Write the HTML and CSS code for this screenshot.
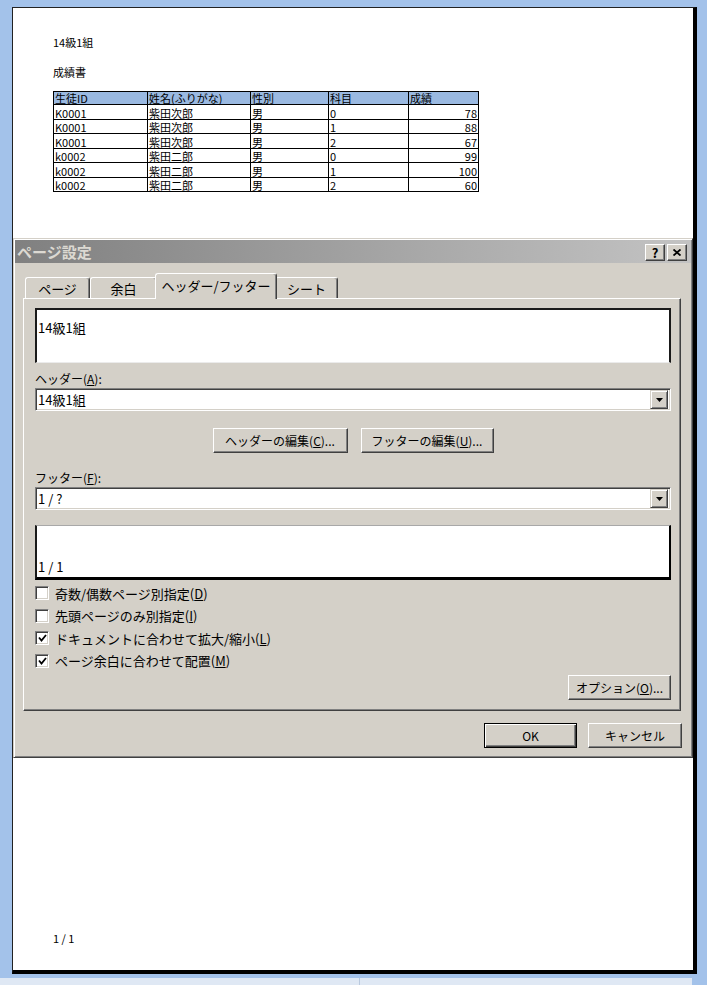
FILE: index.html
```html
<!DOCTYPE html>
<html lang="ja">
<head>
  <meta charset="UTF-8" />
  <meta name="viewport" content="width=device-width, initial-scale=1.0"/>
  <title>ページ設定</title>
  <link rel="stylesheet" href="styles.css">
</head>
<body>
  <div class="screen">
    <div class="page">
      <div class="sheet">
        <p class="sheet-head">14級1組</p>
        <p class="sheet-title">成績書</p>
        <table class="grades">
          <colgroup>
            <col style="width:94px"><col style="width:103px"><col style="width:78px"><col style="width:80px"><col style="width:70px">
          </colgroup>
          <tr class="head">
            <th>生徒ID</th><th>姓名(ふりがな)</th><th>性別</th><th>科目</th><th>成績</th>
          </tr>
          <tr><td>K0001</td><td>紫田次郎</td><td>男</td><td>0</td><td class="num">78</td></tr>
          <tr><td>K0001</td><td>紫田次郎</td><td>男</td><td>1</td><td class="num">88</td></tr>
          <tr><td>K0001</td><td>紫田次郎</td><td>男</td><td>2</td><td class="num">67</td></tr>
          <tr><td>k0002</td><td>紫田二郎</td><td>男</td><td>0</td><td class="num">99</td></tr>
          <tr><td>k0002</td><td>紫田二郎</td><td>男</td><td>1</td><td class="num">100</td></tr>
          <tr><td>k0002</td><td>紫田二郎</td><td>男</td><td>2</td><td class="num">60</td></tr>
        </table>
      </div>
      <p class="sheet-foot">1 / 1</p>

      <div class="dialog">
        <div class="titlebar">
          <span class="title">ページ設定</span>
          <div class="title-buttons">
            <span class="tbtn">?</span>
            <span class="tbtn">
              <svg width="8" height="7" viewBox="0 0 8 7"><path d="M0.5 0.5 L7.5 6.5 M7.5 0.5 L0.5 6.5" stroke="#000" stroke-width="1.8"/></svg>
            </span>
          </div>
        </div>

        <div class="dialog-body">
          <div class="tabs">
            <div class="tab t-page">ページ</div>
            <div class="tab t-margin">余白</div>
            <div class="tab t-hf active">ヘッダー/フッター</div>
            <div class="tab t-sheet">シート</div>
          </div>

          <div class="panel">
            <div class="preview preview-top">14級1組</div>

            <div class="field-label">ヘッダー(<u>A</u>):</div>
            <div class="combo">
              <span>14級1組</span>
              <span class="drop"><svg width="7" height="4" viewBox="0 0 7 4"><polygon points="0,0 7,0 3.5,4" fill="#000"/></svg></span>
            </div>

            <div class="edit-buttons">
              <button class="btn b-header">ヘッダーの編集(<u>C</u>)...</button>
              <button class="btn b-footer">フッターの編集(<u>U</u>)...</button>
            </div>

            <div class="field-label second">フッター(<u>F</u>):</div>
            <div class="combo">
              <span>1 / ?</span>
              <span class="drop"><svg width="7" height="4" viewBox="0 0 7 4"><polygon points="0,0 7,0 3.5,4" fill="#000"/></svg></span>
            </div>

            <div class="preview preview-bottom">1 / 1</div>

            <ul class="checks">
              <li><span class="box"></span>奇数/偶数ページ別指定(<u>D</u>)</li>
              <li><span class="box"></span>先頭ページのみ別指定(<u>I</u>)</li>
              <li><span class="box"><svg width="9" height="8" viewBox="0 0 9 8"><path d="M1 3.5 L3.5 6.5 L8 1" fill="none" stroke="#000" stroke-width="1.8"/></svg></span>ドキュメントに合わせて拡大/縮小(<u>L</u>)</li>
              <li><span class="box"><svg width="9" height="8" viewBox="0 0 9 8"><path d="M1 3.5 L3.5 6.5 L8 1" fill="none" stroke="#000" stroke-width="1.8"/></svg></span>ページ余白に合わせて配置(<u>M</u>)</li>
            </ul>

            <div class="options">
              <button class="btn b-options">オプション(<u>O</u>)...</button>
            </div>
          </div>

          <div class="dialog-buttons">
            <button class="btn b-ok">OK</button>
            <button class="btn b-cancel">キャンセル</button>
          </div>
        </div>
      </div>
    </div>
    <div class="status"><span class="status-cell"></span></div>
  </div>
</body>
</html>
```

FILE: styles.css
```css
* {
  box-sizing: border-box;
}

body {
  margin: 0;
  background: #a3c2ea;
  font-family: "Noto Sans CJK JP", "Liberation Sans", sans-serif;
  color: #000;
}

.screen {
  width: 707px;
  height: 985px;
  padding: 7px 0 0 12px;
  overflow: hidden;
}

/* printed page */
.page {
  position: relative;
  width: 685px;
  height: 967px;
  background: #fff;
  border-top: 1px solid #222;
  border-left: 1px solid #222;
  border-right: 4px solid #000;
  border-bottom: 4px solid #000;
  padding: 27px 0 25px 40px;
  display: flex;
  flex-direction: column;
}

.sheet-head,
.sheet-title,
.sheet-foot {
  margin: 0;
  font-size: 11px;
  line-height: 14px;
}

.sheet-title {
  margin-top: 16px;
}

.sheet-foot {
  margin-top: auto;
}

.grades {
  margin-top: 12px;
  border-collapse: collapse;
  table-layout: fixed;
  width: 425px;
  font-size: 11px;
  line-height: 12px;
}

.grades th,
.grades td {
  border: 1px solid #000;
  padding: 0 1px;
  text-align: left;
  font-weight: normal;
  vertical-align: bottom;
  white-space: nowrap;
}

.grades th {
  height: 11px;
  background: #9ab9e1;
}

.grades td {
  height: 14.5px;
}

.grades td.num {
  text-align: right;
}

/* status strip at the bottom */
.status {
  margin: 4px 0 0 -12px;
  width: 692px;
  height: 7px;
  background: #dfe8f4;
  display: flex;
}

.status-cell {
  width: 360px;
  border-right: 1px solid #b9c9de;
}

/* dialog window */
.dialog {
  position: absolute;
  left: 0;
  top: 230px;
  width: 680px;
  background: #d4d0c8;
  border: 1px solid;
  border-color: #d4d0c8 #404040 #404040 #d4d0c8;
  box-shadow: inset 1px 1px #fff, inset -1px -1px #808080;
  padding: 1px;
  font-size: 12px;
}

.titlebar {
  height: 23px;
  background: linear-gradient(to right, #808080, #c3c3c3);
  display: flex;
  align-items: center;
  justify-content: space-between;
  padding: 0 4px 0 2px;
}

.title {
  color: #dcd9d2;
  font-weight: bold;
  font-size: 15px;
  line-height: 23px;
}

.title-buttons {
  display: flex;
  gap: 2px;
  margin-top: 2px;
}

.tbtn {
  width: 20px;
  height: 17px;
  background: #d4d0c8;
  border: 1px solid;
  border-color: #fff #404040 #404040 #fff;
  box-shadow: inset -1px -1px #808080;
  display: flex;
  align-items: center;
  justify-content: center;
  font-weight: bold;
  font-size: 13px;
  line-height: 1;
}

.dialog-body {
  padding: 9px 10px 8px 8px;
}

.tabs {
  height: 26px;
  display: flex;
  align-items: flex-end;
  padding-left: 2px;
  font-size: 13px;
}

.tab {
  height: 21px;
  background: #d4d0c8;
  border-top: 1px solid #fff;
  border-left: 1px solid #fff;
  border-right: 1px solid #404040;
  box-shadow: inset -1px 0 #808080;
  border-radius: 3px 3px 0 0;
  display: flex;
  align-items: center;
  justify-content: center;
  line-height: 1;
  padding-top: 1px;
}

.t-page { width: 65px; }
.t-margin { width: 67px; }
.t-sheet { width: 63px; }

.tab.active {
  position: relative;
  z-index: 2;
  width: 122px;
  height: 26px;
  margin: 0 -2px -1px;
  padding-top: 0;
  padding-bottom: 2px;
}

.panel {
  border-top: 1px solid #fff;
  border-left: 1px solid #fff;
  border-right: 1px solid #404040;
  border-bottom: 1px solid #404040;
  box-shadow: inset -1px -1px #808080;
  padding: 9px 9px 10px 11px;
}

.preview {
  height: 55px;
  background: #fff;
  font-size: 13px;
  line-height: 17px;
  padding-left: 1px;
}

.preview-top {
  border: 2px solid #1a1a1a;
  border-bottom: 1px solid #ebebeb;
  padding-top: 9px;
}

.preview-bottom {
  margin-top: 15px;
  border-top: 1px solid #a8a8a8;
  border-left: 2px solid #1a1a1a;
  border-right: 2px solid #000;
  border-bottom: 3px solid #000;
  display: flex;
  align-items: flex-end;
  padding-bottom: 2px;
}

.field-label {
  margin-top: 8px;
  margin-bottom: 2px;
  line-height: 15px;
  height: 15px;
}

.field-label.second {
  margin-top: 17px;
}

.combo {
  height: 23px;
  background: #fff;
  border: 1px solid;
  border-color: #808080 #fff #fff #808080;
  box-shadow: inset 1px 1px #404040, inset -1px -1px #d4d0c8;
  display: flex;
  align-items: center;
  padding: 0 2px 0 2px;
  font-size: 13px;
}

.drop {
  margin-left: auto;
  width: 18px;
  height: 19px;
  background: #d4d0c8;
  border: 1px solid;
  border-color: #d4d0c8 #404040 #404040 #d4d0c8;
  box-shadow: inset 1px 1px #fff, inset -1px -1px #808080;
  display: flex;
  align-items: center;
  justify-content: center;
}

.btn {
  height: 25px;
  padding: 0;
  background: #d4d0c8;
  border: 1px solid;
  border-color: #fff #404040 #404040 #fff;
  box-shadow: inset -1px -1px #808080;
  font-family: inherit;
  font-size: 12px;
  color: #000;
  line-height: 1;
}

.edit-buttons {
  margin-top: 17px;
  display: flex;
  justify-content: center;
  gap: 13px;
}

.b-header { width: 135px; }
.b-footer { width: 133px; }

.checks {
  list-style: none;
  margin: 2px 0 0;
  padding: 0;
  font-size: 13px;
}

.checks li {
  height: 22.5px;
  display: flex;
  align-items: center;
}

.box {
  width: 14px;
  height: 14px;
  margin-right: 6px;
  background: #fff;
  border: 1px solid;
  border-color: #808080 #fff #fff #808080;
  box-shadow: inset 1px 1px #404040, inset -1px -1px #d4d0c8;
  display: flex;
  align-items: center;
  justify-content: center;
}

.options {
  margin-top: 3px;
  display: flex;
  justify-content: flex-end;
}

.b-options { width: 103px; }

.dialog-buttons {
  margin-top: 12px;
  display: flex;
  justify-content: flex-end;
  gap: 11px;
}

.b-ok {
  width: 93px;
  border: 1px solid #000;
  box-shadow: inset 1px 1px #fff, inset -1px -1px #404040, inset -2px -2px #808080;
}

.b-cancel {
  width: 94px;
  margin-right: -1px;
}
```
